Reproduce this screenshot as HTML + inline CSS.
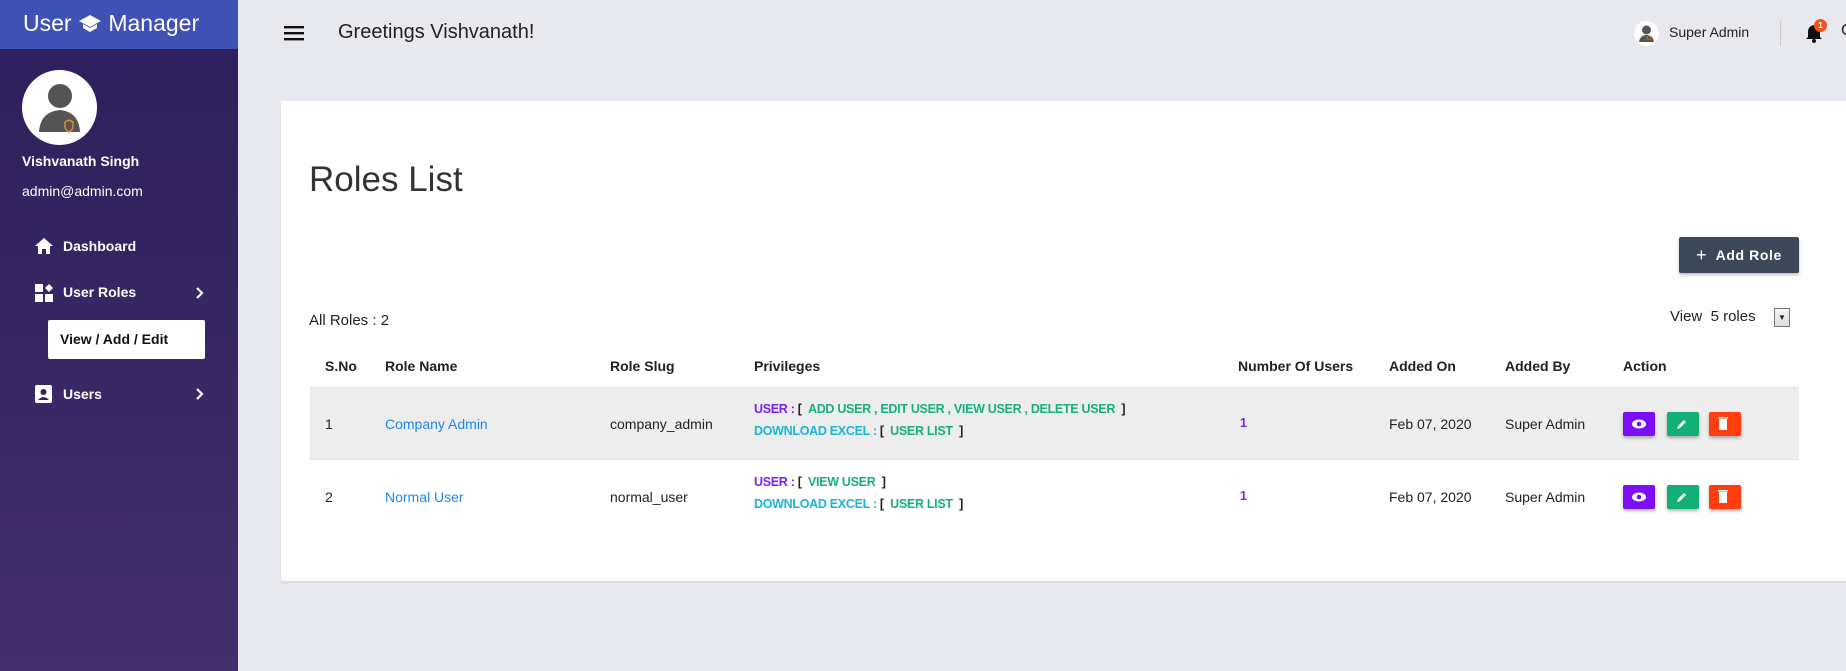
<!DOCTYPE html>
<html><head><meta charset="utf-8"><style>
*{margin:0;padding:0;box-sizing:border-box}
body{width:1846px;height:671px;overflow:hidden;background:#e8e9ee;font-family:"Liberation Sans",sans-serif;position:relative;color:#222}
.abs{position:absolute}
#side{left:0;top:0;width:238px;height:671px;background:linear-gradient(#2c1e5c,#432f6c)}
#brand{left:0;top:0;width:238px;height:49px;background:#3f51b5;color:#fff;font-size:23px;line-height:46px;padding-left:23px}
.nav{color:#fff;font-weight:bold;font-size:14px}
.hd{font-weight:bold;font-size:14px;color:#222;top:358px}
.p{font-weight:bold;font-size:12.5px;letter-spacing:-0.3px}
.pu{color:#7c1ff5}.cy{color:#1ab5d5}.gr{color:#18b078}
.btn{width:32px;height:24px;border-radius:2px;box-shadow:0 2px 3px rgba(0,0,0,.3)}
</style></head><body>
<div id="side" class="abs"></div>
<div id="brand" class="abs">User <svg width="24" height="20" viewBox="0 0 24 20" style="vertical-align:-2px"><path d="M12 2 L23 8 L12 14 L1 8Z" fill="#fff"/><path d="M5 11v4l7 4 7-4v-4l-7 4z" fill="#fff"/></svg> Manager</div>
<div class="abs" style="left:22px;top:70px;width:75px;height:75px;border-radius:50%;background:#fff"></div>
<svg class="abs" style="left:22px;top:70px" width="75" height="75" viewBox="0 0 75 75"><circle cx="38" cy="26" r="12" fill="#555"/><path d="M17 62 Q18 42 38 40 Q57 42 58 62 Z" fill="#555"/><path d="M43 52 l4-2 4 2 v4 q0 4-4 6 q-4-2-4-6z" fill="none" stroke="#e08a2a" stroke-width="1.5"/></svg>
<div class="abs nav" style="left:22px;top:153px">Vishvanath Singh</div>
<div class="abs" style="left:22px;top:183px;color:#fff;font-size:14px">admin@admin.com</div>
<svg class="abs" style="left:35px;top:238px" width="18" height="16" viewBox="0 0 18 16"><path d="M9 0 L18 8 H15 V16 H11 V11 H7 V16 H3 V8 H0Z" fill="#fff"/></svg>
<div class="abs nav" style="left:63px;top:238px">Dashboard</div>
<svg class="abs" style="left:35px;top:284px" width="18" height="18" viewBox="0 0 18 18"><rect x="0" y="0" width="8" height="8" fill="#fff"/><rect x="0" y="10" width="8" height="8" fill="#fff"/><rect x="10" y="10" width="8" height="8" fill="#fff"/><path d="M14 0 L18 4 L14 8 L10 4Z" fill="#fff"/></svg>
<div class="abs nav" style="left:63px;top:284px">User Roles</div>
<svg class="abs" style="left:195px;top:286px" width="10" height="14"><path d="M2 2 L7 7 L2 12" fill="none" stroke="#fff" stroke-width="2.2"/></svg>
<div class="abs" style="left:48px;top:320px;width:157px;height:39px;background:#fff;border-radius:2px;font-weight:bold;font-size:14px;line-height:39px;padding-left:12px;color:#111">View / Add / Edit</div>
<svg class="abs" style="left:35px;top:385px" width="17" height="18" viewBox="0 0 17 18"><rect width="17" height="18" rx="2" fill="#fff"/><circle cx="8.5" cy="7" r="3" fill="#33245f"/><path d="M3 15 q5.5-6 11 0z" fill="#33245f"/></svg>
<div class="abs nav" style="left:63px;top:386px">Users</div>
<svg class="abs" style="left:195px;top:387px" width="10" height="14"><path d="M2 2 L7 7 L2 12" fill="none" stroke="#fff" stroke-width="2.2"/></svg>

<svg class="abs" style="left:284px;top:25px" width="20" height="16"><rect y="1" width="20" height="2.4" fill="#111"/><rect y="7" width="20" height="2.4" fill="#111"/><rect y="13" width="20" height="2.4" fill="#111"/></svg>
<div class="abs" style="left:338px;top:21px;font-size:20px;color:#222">Greetings Vishvanath!</div>
<div class="abs" style="left:1634px;top:21px;width:25px;height:25px;border-radius:50%;background:#fff"></div>
<svg class="abs" style="left:1634px;top:21px" width="25" height="25" viewBox="0 0 25 25"><circle cx="12.5" cy="9" r="4.5" fill="#555"/><path d="M5 21 q1-7 7.5-7 q6.5 0 7.5 7z" fill="#555"/><circle cx="15" cy="17" r="2" fill="none" stroke="#c07030"/></svg>
<div class="abs" style="left:1669px;top:24px;font-size:14px;color:#222">Super Admin</div>
<div class="abs" style="left:1780px;top:21px;width:1px;height:25px;background:#ccc"></div>
<svg class="abs" style="left:1805px;top:24px" width="18" height="19" viewBox="0 0 18 19"><path d="M9 1 q-6 1-6 7 v5 l-2 2 h16 l-2-2 v-5 q0-6-6-7z" fill="#111"/><circle cx="9" cy="17" r="2" fill="#111"/></svg>
<div class="abs" style="left:1814px;top:19px;width:13px;height:13px;border-radius:50%;background:#f4511e;color:#fff;font-size:8px;text-align:center;line-height:13px;font-weight:bold">1</div>
<div class="abs" style="left:1841px;top:22px;font-size:16px">C</div>

<div class="abs" style="left:281px;top:101px;width:1565px;height:480px;background:#fff;box-shadow:0 1px 2px rgba(0,0,0,.12)"></div>
<div class="abs" style="left:309px;top:160px;font-size:35px;font-weight:300;color:#333">Roles List</div>
<div class="abs" style="left:1679px;top:237px;width:120px;height:36px;background:#3c4858;border-radius:2px;box-shadow:0 2px 3px rgba(0,0,0,.25);color:#fff;font-weight:bold;font-size:14px;letter-spacing:.6px;line-height:36px;text-align:center"><span style="font-size:18px;font-weight:normal;vertical-align:-1px">+</span>&nbsp; Add Role</div>
<div class="abs" style="left:309px;top:312px;font-size:15px">All Roles : 2</div>
<div class="abs" style="left:1670px;top:308px;font-size:15px">View&nbsp; 5 roles</div>
<div class="abs" style="left:1774px;top:308px;width:16px;height:19px;border:1px solid #777;background:linear-gradient(#f6f6f6,#ddd);font-size:8px;text-align:center;line-height:17px">&#9660;</div>

<div class="abs hd" style="left:325px">S.No</div>
<div class="abs hd" style="left:385px">Role Name</div>
<div class="abs hd" style="left:610px">Role Slug</div>
<div class="abs hd" style="left:754px">Privileges</div>
<div class="abs hd" style="left:1238px">Number Of Users</div>
<div class="abs hd" style="left:1389px">Added On</div>
<div class="abs hd" style="left:1505px">Added By</div>
<div class="abs hd" style="left:1623px">Action</div>

<div class="abs" style="left:310px;top:387px;width:1489px;height:73px;background:#ededed;border-top:1px solid #e0e0e0;border-bottom:1px solid #e0e0e0"></div>

<div class="abs" style="left:325px;top:416px;font-size:14px">1</div>
<div class="abs" style="left:385px;top:416px;font-size:14px;color:#1e88e5">Company Admin</div>
<div class="abs" style="left:610px;top:416px;font-size:14px">company_admin</div>
<div class="abs p" style="left:754px;top:402px"><span class="pu">USER :</span> [ &nbsp;<span class="gr">ADD USER , EDIT USER , VIEW USER , DELETE USER</span> &nbsp;]</div>
<div class="abs p" style="left:754px;top:424px"><span class="cy">DOWNLOAD EXCEL :</span> [ &nbsp;<span class="gr">USER LIST</span> &nbsp;]</div>
<div class="abs p pu" style="left:1240px;top:416px">1</div>
<div class="abs" style="left:1389px;top:416px;font-size:14px">Feb 07, 2020</div>
<div class="abs" style="left:1505px;top:416px;font-size:14px">Super Admin</div>

<div class="abs" style="left:325px;top:489px;font-size:14px">2</div>
<div class="abs" style="left:385px;top:489px;font-size:14px;color:#1e88e5">Normal User</div>
<div class="abs" style="left:610px;top:489px;font-size:14px">normal_user</div>
<div class="abs p" style="left:754px;top:475px"><span class="pu">USER :</span> [ &nbsp;<span class="gr">VIEW USER</span> &nbsp;]</div>
<div class="abs p" style="left:754px;top:497px"><span class="cy">DOWNLOAD EXCEL :</span> [ &nbsp;<span class="gr">USER LIST</span> &nbsp;]</div>
<div class="abs p pu" style="left:1240px;top:489px">1</div>
<div class="abs" style="left:1389px;top:489px;font-size:14px">Feb 07, 2020</div>
<div class="abs" style="left:1505px;top:489px;font-size:14px">Super Admin</div>

<div class="abs btn" style="left:1623px;top:412px;background:#7c0ff5"></div>
<div class="abs btn" style="left:1667px;top:412px;background:#12b076"></div>
<div class="abs btn" style="left:1709px;top:412px;background:#ff3d0f"></div>
<div class="abs btn" style="left:1623px;top:485px;background:#7c0ff5"></div>
<div class="abs btn" style="left:1667px;top:485px;background:#12b076"></div>
<div class="abs btn" style="left:1709px;top:485px;background:#ff3d0f"></div>
<svg class="abs" style="left:1623px;top:412px" width="130" height="97">
<g id="ic"><ellipse cx="16" cy="12" rx="7" ry="4.5" fill="#fff"/><circle cx="16" cy="12" r="2.3" fill="#7c0ff5"/>
<path d="M54 17 l1-3 6-6 2 2-6 6z" fill="#fff"/>
<rect x="96" y="7" width="8" height="11" fill="#fff"/><rect x="95" y="5" width="10" height="1.5" fill="#fff"/></g>
<use href="#ic" y="73"/>
</svg>
</body></html>
